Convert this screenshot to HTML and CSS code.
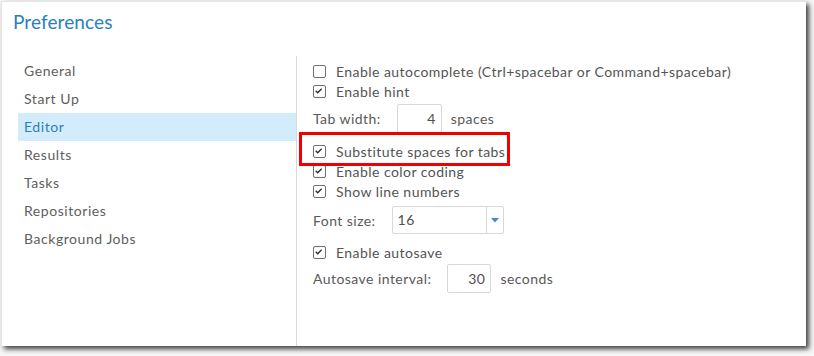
FILE: index.html
```html
<!DOCTYPE html>
<html>
<head>
<meta charset="utf-8">
<link rel="stylesheet" href="styles.css">
</head>
<body>
<div class="window">
  <header class="head"><h1 class="title">Preferences</h1></header>
  <div class="body">
    <nav class="nav">
      <div class="nav-item">General</div>
      <div class="nav-item">Start Up</div>
      <div class="nav-item active">Editor</div>
      <div class="nav-item">Results</div>
      <div class="nav-item">Tasks</div>
      <div class="nav-item">Repositories</div>
      <div class="nav-item">Background Jobs</div>
    </nav>
    <main class="content">
      <label class="check-row r1"><span class="box"></span>Enable autocomplete (Ctrl+spacebar or Command+spacebar)</label>
      <label class="check-row"><span class="box checked"><svg viewBox="0 0 13 13"><path d="M3 6.6 L5.4 9 L10 4.2" /></svg></span>Enable hint</label>
      <div class="field-row tab-row"><span class="lbl">Tab width:</span><span class="num w45">4</span><span class="unit">spaces</span></div>
      <label class="check-row highlight"><span class="box checked"><svg viewBox="0 0 13 13"><path d="M3 6.6 L5.4 9 L10 4.2" /></svg></span>Substitute spaces for tabs</label>
      <label class="check-row"><span class="box checked"><svg viewBox="0 0 13 13"><path d="M3 6.6 L5.4 9 L10 4.2" /></svg></span>Enable color coding</label>
      <label class="check-row"><span class="box checked"><svg viewBox="0 0 13 13"><path d="M3 6.6 L5.4 9 L10 4.2" /></svg></span>Show line numbers</label>
      <div class="field-row font-row"><span class="lbl">Font size:</span><span class="select"><span class="sel-val">16</span><span class="sel-arrow"><svg viewBox="0 0 8 5"><path d="M0 0 H8 L4 4.5 Z"/></svg></span></span></div>
      <label class="check-row autosave"><span class="box checked"><svg viewBox="0 0 13 13"><path d="M3 6.6 L5.4 9 L10 4.2" /></svg></span>Enable autosave</label>
      <div class="field-row interval-row"><span class="lbl">Autosave interval:</span><span class="num w44">30</span><span class="unit">seconds</span></div>
    </main>
  </div>
</div>
</body>
</html>
```
FILE: styles.css
```css
html, body {
  margin: 0;
  padding: 0;
}
body {
  width: 814px;
  height: 356px;
  background: #f7f7f7;
  font-family: Lato, "Noto Sans", sans-serif;
  color: #595959;
  font-size: 14px;
  letter-spacing: 0.45px;
  overflow: hidden;
}
.window {
  margin: 1px 0 0 1px;
  width: 804px;
  height: 344px;
  background: #ffffff;
  border-top: 1px solid #e4e4e4;
  border-left: 1px solid #e4e4e4;
  box-shadow: 3px 3px 5px rgba(0, 0, 0, 0.75);
  display: flex;
  flex-direction: column;
}
.head {
  height: 54px;
  padding-left: 11px;
  box-sizing: border-box;
}
.title {
  margin: 0;
  padding-top: 8px;
  font-size: 19px;
  font-weight: 400;
  color: #2a7fbd;
  letter-spacing: 0.1px;
}
.body {
  flex: 1;
  display: flex;
}
.nav {
  width: 278px;
  margin-left: 16px;
  padding-top: 1px;
}
.nav-item {
  height: 28px;
  line-height: 28px;
  padding-left: 6px;
  color: #5e5e5e;
  letter-spacing: 0.55px;
}
.nav-item.active {
  background: #d3ecfb;
  color: #2a7fbd;
}
.content {
  flex: 1;
  border-left: 1px solid #d9d9d9;
  padding-left: 16px;
  padding-top: 5px;
  display: flex;
  flex-direction: column;
}
.check-row {
  display: flex;
  align-items: center;
  height: 20px;
  color: #545454;
}
.check-row.highlight {
  position: relative;
  margin-top: 8px;
}
.check-row.highlight::after {
  content: "";
  position: absolute;
  left: -14px;
  top: -9px;
  width: 211px;
  height: 34px;
  box-sizing: border-box;
  border: 3px solid #f20000;
}
.box {
  width: 13px;
  height: 13px;
  box-sizing: border-box;
  border: 1px solid #707070;
  border-radius: 2px;
  margin-right: 10px;
  flex: none;
  display: flex;
}
.box svg {
  width: 11px;
  height: 11px;
}
.box path {
  fill: none;
  stroke: #2b2b2b;
  stroke-width: 1.5;
  transform: translate(-1px, -1px);
}
.field-row {
  display: flex;
  align-items: center;
}
.tab-row {
  margin-top: 3px;
}
.font-row {
  margin-top: 5px;
}
.autosave {
  margin-top: 8px;
}
.interval-row {
  margin-top: 2px;
}
.lbl {
  margin-right: 16px;
}
.num {
  height: 29px;
  box-sizing: border-box;
  border: 1px solid #d8d8d8;
  border-radius: 2px;
  text-align: right;
  padding-right: 5px;
  line-height: 27px;
  color: #4f4f4f;
}
.w45 { width: 45px; }
.w44 { width: 44px; }
.unit {
  margin-left: 9px;
}
.select {
  width: 112px;
  height: 28px;
  box-sizing: border-box;
  border: 1px solid #d8d8d8;
  border-radius: 2px;
  display: flex;
}
.sel-val {
  flex: 1;
  padding-left: 5px;
  line-height: 26px;
  color: #4f4f4f;
}
.sel-arrow {
  width: 16px;
  border-left: 1px solid #d8d8d8;
  display: flex;
  align-items: center;
  justify-content: center;
}
.sel-arrow svg {
  width: 8px;
  height: 5px;
}
.sel-arrow path {
  fill: #4a8ac4;
}
```
